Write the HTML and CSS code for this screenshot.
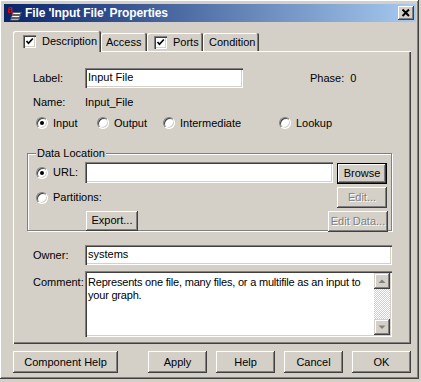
FILE: index.html
```html
<!DOCTYPE html>
<html>
<head>
<meta charset="utf-8">
<link rel="stylesheet" href="styles.css">
</head>
<body>
<div class="window">
  <div class="titlebar">
    <svg class="appicon" width="16" height="16" viewBox="0 0 16 16">
      <g stroke="#606060" stroke-width="1" fill="#fff">
        <path d="M7.5 7.5 h8 l-1.5 2 h-8 z"/>
        <path d="M6.5 10.5 h8 l-1.5 2 h-8 z"/>
        <path d="M5.5 13.5 h8 l-1 1.5 h-8 z"/>
      </g>
      <text x="1" y="7.5" fill="#e00000" font-family="Liberation Sans" font-weight="bold" font-size="10">a</text>
    </svg>
    <span class="title">File 'Input File' Properties</span>
    <span class="close">
      <svg width="16" height="14" viewBox="0 0 16 14">
        <path d="M4.5 3.5 L11 10 M11 3.5 L4.5 10" stroke="#000" stroke-width="2" fill="none"/>
      </svg>
    </span>
  </div>
  <div class="body">
    <div class="tabs">
      <div class="tab active t-desc"><span class="check"><svg width="9" height="9" viewBox="0 0 9 9"><path d="M1.5 4 L3.5 6.2 L7.8 1.5" stroke="#000" stroke-width="1.7" fill="none"/></svg></span>Description</div>
      <div class="tab t-access">Access</div>
      <div class="tab t-ports"><span class="check"><svg width="9" height="9" viewBox="0 0 9 9"><path d="M1.5 4 L3.5 6.2 L7.8 1.5" stroke="#000" stroke-width="1.7" fill="none"/></svg></span>Ports</div>
      <div class="tab t-cond">Condition</div>
    </div>
    <div class="panel">
      <div class="row r-label">
        <span class="lbl">Label:</span>
        <div class="field w-label">Input File</div>
        <span class="phase">Phase:&nbsp; 0</span>
      </div>
      <div class="row r-name">
        <span class="lbl">Name:</span>
        <span>Input_File</span>
      </div>
      <div class="row r-radios">
        <span class="ritem ri-1"><span class="radio checked"></span>Input</span>
        <span class="ritem ri-2"><span class="radio"></span>Output</span>
        <span class="ritem ri-3"><span class="radio"></span>Intermediate</span>
        <span class="ritem"><span class="radio"></span>Lookup</span>
      </div>
      <div class="group">
        <span class="legend">Data Location</span>
        <div class="grow g-url">
          <span class="ritem ri-url"><span class="radio checked"></span>URL:</span>
          <div class="field w-url"></div>
          <span class="btn default b-browse">Browse</span>
        </div>
        <div class="grow g-part">
          <span class="ritem"><span class="radio"></span>Partitions:</span>
          <span class="btn disabled b-edit">Edit...</span>
        </div>
        <div class="grow g-export">
          <span class="btn b-export">Export...</span>
          <span class="btn disabled b-editdata">Edit Data...</span>
        </div>
      </div>
      <div class="row r-owner">
        <span class="lbl">Owner:</span>
        <div class="field w-owner">systems</div>
      </div>
      <div class="row r-comment">
        <span class="lbl lbl-comment">Comment:</span>
        <div class="textarea">
          <div class="ta-text">Represents one file, many files, or a multifile as an input to<br>your graph.</div>
          <div class="scrollbar">
            <span class="sbtn"><svg width="14" height="14" viewBox="0 0 14 14"><path d="M3.5 9 h7 l-3.5 -3.5 z" fill="#808080"/></svg></span>
            <span class="track"></span>
            <span class="sbtn"><svg width="14" height="14" viewBox="0 0 14 14"><path d="M3.5 5.5 h7 l-3.5 3.5 z" fill="#808080"/></svg></span>
          </div>
        </div>
      </div>
    </div>
    <div class="buttons">
      <span class="btn b-comp">Component Help</span>
      <span class="btn b-std b-apply">Apply</span>
      <span class="btn b-std b-gap">Help</span>
      <span class="btn b-std b-gap">Cancel</span>
      <span class="btn b-std b-gap">OK</span>
    </div>
  </div>
</div>
</body>
</html>
```
FILE: styles.css
```css
html, body {
  margin: 0;
  padding: 0;
  background: #d4d0c8;
}
body {
  font-family: "Liberation Sans", Arial, sans-serif;
  font-size: 11px;
  color: #000;
  line-height: 13px;
}
.window {
  width: 419px;
  height: 379px;
  box-sizing: border-box;
  padding: 4px 3px 0 4px;
  background: #d4d0c8;
  box-shadow: inset -1px -1px 0 #404040, inset 1px 1px 0 #fff, inset -2px -2px 0 #808080, inset 2px 2px 0 #d4d0c8;
}
.titlebar {
  height: 18px;
  display: flex;
  align-items: center;
  padding-left: 2px;
  background: linear-gradient(to right, #0a246a, #a6caf0);
  color: #fff;
}
.appicon { flex: none; }
.title {
  margin-left: 3px;
  font-weight: bold;
  font-size: 12px;
  letter-spacing: -0.1px;
  flex: 1;
  white-space: nowrap;
}
.close {
  width: 16px;
  height: 14px;
  margin-right: 2px;
  background: #d4d0c8;
  box-shadow: inset -1px -1px 0 #404040, inset 1px 1px 0 #fff, inset -2px -2px 0 #808080;
  display: flex;
}
.body {
  padding-left: 9px;
}
.tabs {
  margin-top: 9px;
  height: 20px;
  display: flex;
  align-items: flex-end;
  position: relative;
  z-index: 1;
}
.tab {
  height: 18px;
  box-sizing: border-box;
  display: flex;
  align-items: center;
  background: #d4d0c8;
  border-radius: 2px 2px 0 0;
  box-shadow: inset -1px 0 0 #404040, inset 1px 1px 0 #fff, inset -2px 0 0 #808080;
  white-space: nowrap;
}
.tab.active {
  height: 21px;
  margin-bottom: -1px;
  padding-bottom: 1px;
}
.t-desc { width: 88px; padding-left: 10px; }
.t-access { width: 46px; padding-left: 5px; }
.t-ports { width: 56px; padding-left: 7px; }
.t-cond { width: 56px; padding-left: 6px; }
.check {
  width: 13px;
  height: 13px;
  box-sizing: border-box;
  margin-right: 6px;
  background: #fff;
  box-shadow: inset 1px 1px 0 #808080, inset 2px 2px 0 #404040, inset -1px -1px 0 #fff, inset -2px -2px 0 #d4d0c8;
  display: flex;
  align-items: center;
  justify-content: center;
}
.panel {
  width: 398px;
  height: 293px;
  box-sizing: border-box;
  padding: 17px 0 0 20px;
  box-shadow: inset 1px 1px 0 #fff, inset -1px -1px 0 #404040, inset -2px -2px 0 #808080;
}
.row {
  display: flex;
  align-items: center;
}
.lbl {
  width: 52px;
  flex: none;
}
.field {
  height: 20px;
  box-sizing: border-box;
  padding: 3px 0 0 3px;
  background: #fff;
  box-shadow: inset 1px 1px 0 #808080, inset 2px 2px 0 #404040, inset -1px -1px 0 #fff, inset -2px -2px 0 #d4d0c8;
  white-space: nowrap;
}
.r-label { height: 20px; }
.w-label { width: 158px; }
.phase { margin-left: 67px; }
.r-name { margin-top: 7px; height: 14px; }
.r-radios { margin-top: 7px; height: 14px; padding-left: 3px; }
.ritem {
  display: flex;
  align-items: center;
  white-space: nowrap;
}
.ri-1 { width: 61px; }
.ri-2 { width: 66px; }
.ri-3 { width: 116px; }
.radio {
  width: 12px;
  height: 12px;
  box-sizing: border-box;
  border-radius: 50%;
  border: 1px solid;
  border-color: #808080 #fff #fff #808080;
  background: #fff;
  box-shadow: inset 1px 1px 0 #404040, inset -1px -1px 0 #d4d0c8;
  margin-right: 5px;
  position: relative;
  flex: none;
}
.radio.checked::after {
  content: "";
  position: absolute;
  left: 3px;
  top: 3px;
  width: 4px;
  height: 4px;
  border-radius: 50%;
  background: #000;
}
.group {
  position: relative;
  margin-top: 23px;
  margin-left: -6px;
  width: 365px;
  height: 78px;
  box-sizing: border-box;
  border: 1px solid #808080;
  box-shadow: 1px 1px 0 #fff, inset 1px 1px 0 #fff;
  padding: 8px 4px 0 8px;
}
.legend {
  position: absolute;
  left: 8px;
  top: -7px;
  padding: 0 1px;
  background: #d4d0c8;
  line-height: 13px;
}
.grow {
  display: flex;
  align-items: center;
}
.g-url { height: 21px; }
.ri-url { width: 49px; }
.w-url { width: 248px; height: 21px; }
.btn {
  height: 22px;
  box-sizing: border-box;
  display: flex;
  align-items: center;
  justify-content: center;
  background: #d4d0c8;
  box-shadow: inset -1px -1px 0 #404040, inset 1px 1px 0 #fff, inset -2px -2px 0 #808080;
  white-space: nowrap;
  flex: none;
}
.btn.default {
  box-shadow: inset 0 0 0 1px #000, inset -2px -2px 0 #404040, inset 2px 2px 0 #fff, inset -3px -3px 0 #808080;
}
.btn.disabled {
  color: #808080;
  text-shadow: 1px 1px 0 #fff;
}
.b-browse { width: 50px; height: 21px; margin-left: 4px; align-self: flex-start; margin-top: 1px; }
.g-part { margin-top: 4px; height: 21px; justify-content: space-between; }
.b-edit { width: 50px; height: 21px; }
.g-export { margin-top: 2px; height: 21px; justify-content: space-between; }
.b-export { width: 52px; height: 20px; margin-left: 50px; }
.b-editdata { width: 60px; height: 21px; margin-right: -1px; margin-top: 1px; }
.r-owner { margin-top: 14px; height: 20px; }
.w-owner { width: 307px; }
.r-comment { margin-top: 6px; align-items: flex-start; }
.lbl-comment { margin-top: 5px; }
.textarea {
  width: 307px;
  height: 66px;
  box-sizing: border-box;
  padding: 2px;
  display: flex;
  background: #fff;
  box-shadow: inset 1px 1px 0 #808080, inset 2px 2px 0 #404040, inset -1px -1px 0 #fff, inset -2px -2px 0 #d4d0c8;
}
.ta-text {
  flex: 1;
  padding: 3px 0 0 1px;
  white-space: nowrap;
  letter-spacing: -0.2px;
}
.scrollbar {
  width: 16px;
  display: flex;
  flex-direction: column;
}
.sbtn {
  width: 16px;
  height: 16px;
  box-sizing: border-box;
  padding: 1px;
  background: #d4d0c8;
  box-shadow: inset -1px -1px 0 #404040, inset 1px 1px 0 #d4d0c8, inset -2px -2px 0 #808080, inset 2px 2px 0 #fff;
  display: flex;
}
.track {
  flex: 1;
  background: repeating-conic-gradient(#fff 0 25%, #d4d0c8 0 50%) 0 0 / 2px 2px;
}
.buttons {
  margin-top: 7px;
  display: flex;
}
.b-comp { width: 105px; }
.b-std { width: 59px; }
.b-apply { margin-left: 30px; }
.b-gap { margin-left: 9px; }
```
